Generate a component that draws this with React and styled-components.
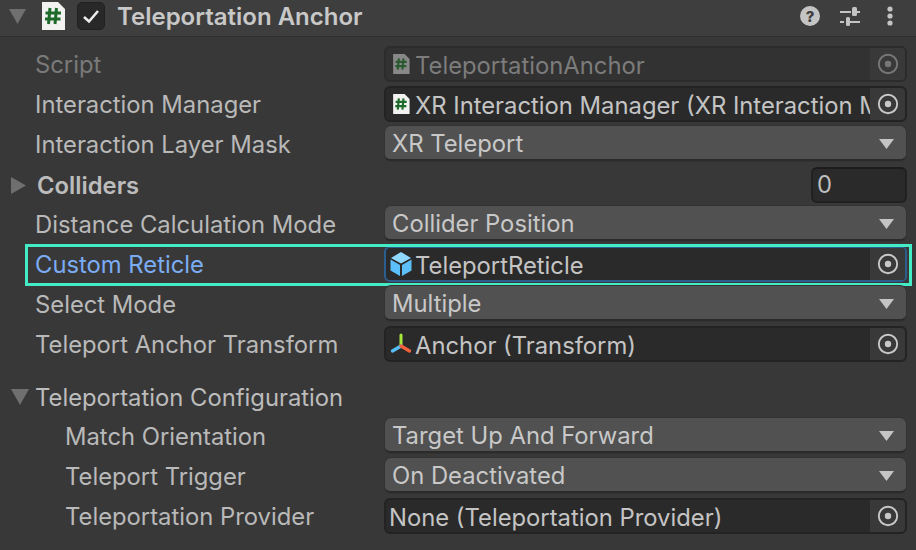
import React from 'react';
import styled, { createGlobalStyle } from 'styled-components';

const Global = createGlobalStyle`
  html, body { margin: 0; padding: 0; background: #383838; }
  * { box-sizing: border-box; }
`;

const Page = styled.div`
  width: 916px; height: 550px; overflow: hidden; background: #383838;
  font-family: Inter, "Noto Sans", sans-serif; font-size: 23.8px; color: #c4c4c4;
`;
const Header = styled.header`
  height: 37px; background: #3e3e3e; border-bottom: 1px solid #2f2f2f;
  display: flex; align-items: center; padding: 0 23px 4px 9px;
`;
const Title = styled.h1`
  margin: 0 0 0 12px; font-size: 24px; font-weight: 600; color: #c8c8c8; flex: 1; white-space: nowrap;
`;
const CheckBox = styled.div`
  width: 28px; height: 28px; margin-left: 12px; border-radius: 5px; background: #282828; border: 1px solid #202020;
  display: flex; align-items: center; justify-content: center;
`;
const ArrowGap = styled.div`width: 15px; flex: none;`;
const HeaderTools = styled.div`
  display: flex; align-items: center; gap: 20px;
`;
const Kebab = styled.svg`margin-left: 7px;`;
const Body = styled.main`
  padding-top: 8px; display: flex; flex-direction: column;
`;
const Row = styled.div`
  position: relative; height: 40px; display: grid;
  padding-left: ${p => (p.$indent ? 65 : 35)}px;
  grid-template-columns: ${p => (p.$indent ? 319 : 349)}px 523px;
`;
const Label = styled.div`
  line-height: 40px; white-space: nowrap;
  color: ${p => (p.$tone === 'off' ? '#7a7a7a' : p.$tone === 'blue' ? '#7bacf2' : '#b9b9b9')};
`;
const ObjectField = styled.div`
  height: 36px; margin-top: 1px; border-radius: 6px; display: flex; align-items: center; overflow: hidden;
  background: ${p => (p.$off ? '#323232' : '#2a2a2a')};
  border: 2px solid ${p => (p.$focus ? '#2c5d8f' : p.$off ? '#2c2c2c' : '#232323')};
  color: ${p => (p.$off ? '#7c7c7c' : '#c4c4c4')};
`;
const FieldText = styled.span`
  flex: 1; min-width: 0; margin-left: ${p => (p.$bare ? 3 : 2)}px; white-space: nowrap; overflow: hidden;
  height: 32px; line-height: 36px;
`;
const Picker = styled.div`
  width: 35px; height: 100%; flex: none; display: flex; align-items: center; justify-content: center;
  background: #393939;
`;
const IconSlot = styled.div`
  width: 24px; flex: none; margin-left: 3px; display: flex; align-items: center; justify-content: center;
`;
const Dropdown = styled.div`
  height: 35px; margin: 1px 1px 0; border-radius: 6px; background: #515151; border-bottom: 2px solid #2b2b2b;
  box-shadow: 0 0 0 1px #333; display: flex; align-items: center; justify-content: space-between;
  padding: 2px 12px 0 7px; color: #c8c8c8; line-height: 31px; white-space: nowrap;
`;
const FoldRow = styled.div`
  position: relative; height: 40px; display: flex; align-items: center; justify-content: space-between; padding-right: 9px;
`;
const FoldLabel = styled.div`
  display: flex; align-items: center; color: #bcbcbc; font-weight: ${p => (p.$bold ? 600 : 400)};
`;
const Arrow = styled.svg`
  margin-left: ${p => p.$left}px; margin-right: ${p => p.$right}px; flex: none;
`;
const NumberField = styled.div`
  width: 96px; height: 36px; border-radius: 6px; background: #2a2a2a; border: 2px solid #212121; border-top-color: #1c1c1c;
  padding-left: 4px; line-height: 32px; color: #bdbdbd;
`;
const Highlight = styled.div`
  position: absolute; left: 25px; top: -1px; width: 887px; height: 42px; border: 3px solid #43ecc4; pointer-events: none;
`;
const SectionGap = styled.div`height: 12px;`;

const ScriptIcon = ({ w = 24, h = 28, dim }) => (
  <svg width={w} height={h} viewBox="0 0 24 28">
    <path d="M1 0H17L24 7V28H1Z" fill={dim ? '#888' : '#f2f2f0'} />
    <path d="M9 6 7.5 22M15.5 6 14 22M4.5 11H20M4 17H19.5" stroke={dim ? '#2c5a30' : '#1d6a2a'} strokeWidth="3" fill="none" />
  </svg>
);
const Target = ({ dim }) => (
  <svg width="22" height="22" viewBox="0 0 22 22">
    <circle cx="11" cy="11" r="9.2" fill="none" stroke={dim ? '#777' : '#c8c8c8'} strokeWidth="1.9" />
    <circle cx="11" cy="11" r="3.2" fill={dim ? '#777' : '#c8c8c8'} />
  </svg>
);
const Caret = () => (
  <svg width="15" height="10" viewBox="0 0 15 10"><path d="M0 0H15L7.5 10Z" fill="#c4c4c4" /></svg>
);
const Cube = () => (
  <svg width="22" height="24" viewBox="0 0 22 24">
    <path d="M11 0 21 6 11 11.5 1 6Z" fill="#8fd8ff" />
    <path d="M0.5 7.5 10 13V24L0.5 18.5Z" fill="#5cc0fb" />
    <path d="M21.5 7.5 12 13V24L21.5 18.5Z" fill="#5cc0fb" />
  </svg>
);
const Gizmo = () => (
  <svg width="22" height="22" viewBox="0 0 22 22">
    <path d="M11 2V12" stroke="#a5e83c" strokeWidth="3" strokeLinecap="round" />
    <path d="M11 13 2.5 18" stroke="#56bdf5" strokeWidth="3.4" strokeLinecap="round" />
    <path d="M11 13 19.5 18" stroke="#f0603a" strokeWidth="3.4" strokeLinecap="round" />
  </svg>
);

const Obj = ({ icon, children, off, focus }) => (
  <ObjectField $off={off} $focus={focus}>
    {icon && <IconSlot>{icon}</IconSlot>}
    <FieldText $bare={!icon}>{children}</FieldText>
    <Picker><Target dim={off} /></Picker>
  </ObjectField>
);
const Drop = ({ children }) => (
  <Dropdown>{children}<Caret /></Dropdown>
);

export default function App() {
  return (
    <Page>
      <Global />
      <Header>
        <svg width="17" height="15" viewBox="0 0 17 15"><path d="M0 0H17L8.5 15Z" fill="#6f6f6f" /></svg>
        <ArrowGap />
        <ScriptIcon />
        <CheckBox>
          <svg width="18" height="15" viewBox="0 0 18 15"><path d="M2 8 7 12.5 16 2" fill="none" stroke="#ececec" strokeWidth="2.6" /></svg>
        </CheckBox>
        <Title>Teleportation Anchor</Title>
        <HeaderTools>
          <svg width="20" height="20" viewBox="0 0 20 20">
            <circle cx="10" cy="10" r="10" fill="#c4c4c4" />
            <text x="10" y="15.5" textAnchor="middle" fontFamily="Inter" fontWeight="800" fontSize="15" fill="#3e3e3e">?</text>
          </svg>
          <svg width="20" height="20" viewBox="0 0 20 20" fill="none">
            <path d="M0 6H11M17 6H20M0 16H4M10 16H20" stroke="#c4c4c4" strokeWidth="2" />
            <rect x="12" y="1" width="5" height="9" rx="1.5" fill="#c4c4c4" />
            <rect x="6" y="11" width="4" height="9" rx="1.5" fill="#c4c4c4" />
          </svg>
          <Kebab width="6" height="20" viewBox="0 0 6 20" fill="#c4c4c4">
            <circle cx="3" cy="3" r="2.6" /><circle cx="3" cy="10" r="2.6" /><circle cx="3" cy="17" r="2.6" />
          </Kebab>
        </HeaderTools>
      </Header>
      <Body>
        <Row>
          <Label $tone="off">Script</Label>
          <Obj off icon={<ScriptIcon w={18} h={20} dim />}>TeleportationAnchor</Obj>
        </Row>
        <Row>
          <Label>Interaction Manager</Label>
          <Obj icon={<ScriptIcon w={18} h={20} />}>XR Interaction Manager (XR Interaction Manager)</Obj>
        </Row>
        <Row>
          <Label>Interaction Layer Mask</Label>
          <Drop>XR Teleport</Drop>
        </Row>
        <FoldRow>
          <FoldLabel $bold>
            <Arrow $left={11} $right={11} width="15" height="17" viewBox="0 0 15 17"><path d="M0 0 15 8.5 0 17Z" fill="#6f6f6f" /></Arrow>
            Colliders
          </FoldLabel>
          <NumberField>0</NumberField>
        </FoldRow>
        <Row>
          <Label>Distance Calculation Mode</Label>
          <Drop>Collider Position</Drop>
        </Row>
        <Row>
          <Label $tone="blue">Custom Reticle</Label>
          <Obj focus icon={<Cube />}>TeleportReticle</Obj>
          <Highlight />
        </Row>
        <Row>
          <Label>Select Mode</Label>
          <Drop>Multiple</Drop>
        </Row>
        <Row>
          <Label>Teleport Anchor Transform</Label>
          <Obj icon={<Gizmo />}>Anchor (Transform)</Obj>
        </Row>
        <SectionGap />
        <FoldRow>
          <FoldLabel>
            <Arrow $left={11} $right={6} width="18" height="16" viewBox="0 0 18 16"><path d="M0 0H18L9 16Z" fill="#6f6f6f" /></Arrow>
            Teleportation Configuration
          </FoldLabel>
        </FoldRow>
        <Row $indent>
          <Label>Match Orientation</Label>
          <Drop>Target Up And Forward</Drop>
        </Row>
        <Row $indent>
          <Label>Teleport Trigger</Label>
          <Drop>On Deactivated</Drop>
        </Row>
        <Row $indent>
          <Label>Teleportation Provider</Label>
          <Obj>None (Teleportation Provider)</Obj>
        </Row>
      </Body>
    </Page>
  );
}
